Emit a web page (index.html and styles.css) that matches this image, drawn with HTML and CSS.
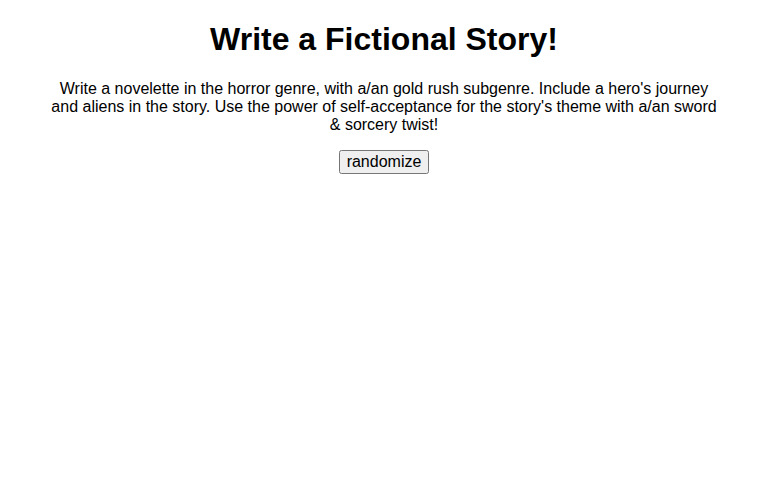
FILE: index.html
```html
<!DOCTYPE html>
<html>
<head>
<meta charset="utf-8">
<link rel="stylesheet" href="styles.css">
</head>
<body>
<main class="app">
  <h1 class="title">Write a Fictional Story!</h1>
  <p class="prompt">Write a novelette in the horror genre, with a/an gold rush subgenre. Include a hero's journey and aliens in the story. Use the power of self-acceptance for the story's theme with a/an sword &amp; sorcery twist!</p>
  <button class="randomize" type="button">randomize</button>
</main>
</body>
</html>
```

FILE: styles.css
```css
body {
  margin: 8px;
  font-family: "Liberation Sans", Arial, sans-serif;
  color: #000;
  background: #fff;
}

.app {
  text-align: center;
  padding: 0 40px;
}

.title {
  font-size: 32px;
  font-weight: bold;
  margin: 13px 0 22px;
}

.prompt {
  font-size: 16px;
  margin: 16px 0;
}

.randomize {
  font-family: "Liberation Sans", Arial, sans-serif;
  font-size: 16px;
}
```
